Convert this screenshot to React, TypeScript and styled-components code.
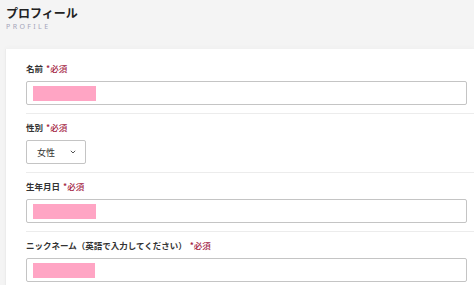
import React from "react";
import styled, { createGlobalStyle } from "styled-components";

const Global = createGlobalStyle`
  html, body { margin: 0; padding: 0; }
  body {
    background: #f4f4f4;
    font-family: "Noto Sans CJK JP", "Noto Sans", sans-serif;
    color: #333;
  }
`;

const Page = styled.div`
  width: 474px;
  height: 285px;
  overflow: hidden;
  display: flex;
  flex-direction: column;
`;

const Header = styled.header`
  flex: none;
  padding: 5px 6px 0;
  height: 49px;
  box-sizing: border-box;
`;

const Title = styled.h1`
  margin: 0;
  font-size: 12px;
  line-height: 16px;
  font-weight: 700;
  letter-spacing: 0;
  color: #222;
`;

const Subtitle = styled.div`
  margin-top: 1px;
  font-family: "Noto Sans", sans-serif;
  font-size: 7px;
  line-height: 9px;
  letter-spacing: 2.4px;
  color: #a5a5ba;
`;

const Card = styled.section`
  flex: 1;
  margin-left: 5px;
  background: #fff;
  border-left: 1px solid #ececec;
  box-shadow: 0 -2px 4px rgba(0, 0, 0, 0.02);
  padding: 6px 0 0 20px;
`;

const Field = styled.div`
  padding: 7px 0 8px;
  border-bottom: 1px solid #ececec;
`;

const Label = styled.div`
  font-size: 8.5px;
  line-height: 13px;
  font-weight: 700;
  color: #333;
  margin-bottom: 6px;
`;

const Required = styled.span`
  color: #a3223f;
  font-weight: 500;
  margin-left: 3px;
`;

const InputBox = styled.div`
  box-sizing: border-box;
  height: 24px;
  margin-right: 7px;
  border: 1px solid #c4c4c4;
  border-radius: 2px;
  background: #fff;
  display: flex;
  align-items: center;
  padding-left: 6px;
`;

const Redacted = styled.span<{ $w: number }>`
  display: block;
  width: ${(p) => p.$w}px;
  height: 15px;
  background: #ffa5c4;
`;

const Select = styled.div`
  box-sizing: border-box;
  width: 60px;
  height: 24px;
  border: 1px solid #c4c4c4;
  border-radius: 2px;
  display: flex;
  align-items: center;
  justify-content: space-between;
  padding: 0 9px 0 10px;
  font-size: 9px;
  color: #333;
`;

const Chevron = () => (
  <svg width="6" height="4" viewBox="0 0 6 4" fill="none">
    <path d="M0.8 0.8 L3 3 L5.2 0.8" stroke="#555" strokeWidth="1" />
  </svg>
);

const fields = [
  { label: "名前", kind: "input", w: 63 },
  { label: "性別", kind: "select" },
  { label: "生年月日", kind: "input", w: 63 },
  { label: "ニックネーム（英語で入力してください）", kind: "input", w: 62 },
];

export default function App() {
  return (
    <Page>
      <Global />
      <Header>
        <Title>プロフィール</Title>
        <Subtitle>PROFILE</Subtitle>
      </Header>
      <Card>
        {fields.map((f) => (
          <Field key={f.label}>
            <Label>
              {f.label}
              <Required>*必須</Required>
            </Label>
            {f.kind === "select" ? (
              <Select>
                <span>女性</span>
                <Chevron />
              </Select>
            ) : (
              <InputBox>
                <Redacted $w={f.w as number} />
              </InputBox>
            )}
          </Field>
        ))}
      </Card>
    </Page>
  );
}
